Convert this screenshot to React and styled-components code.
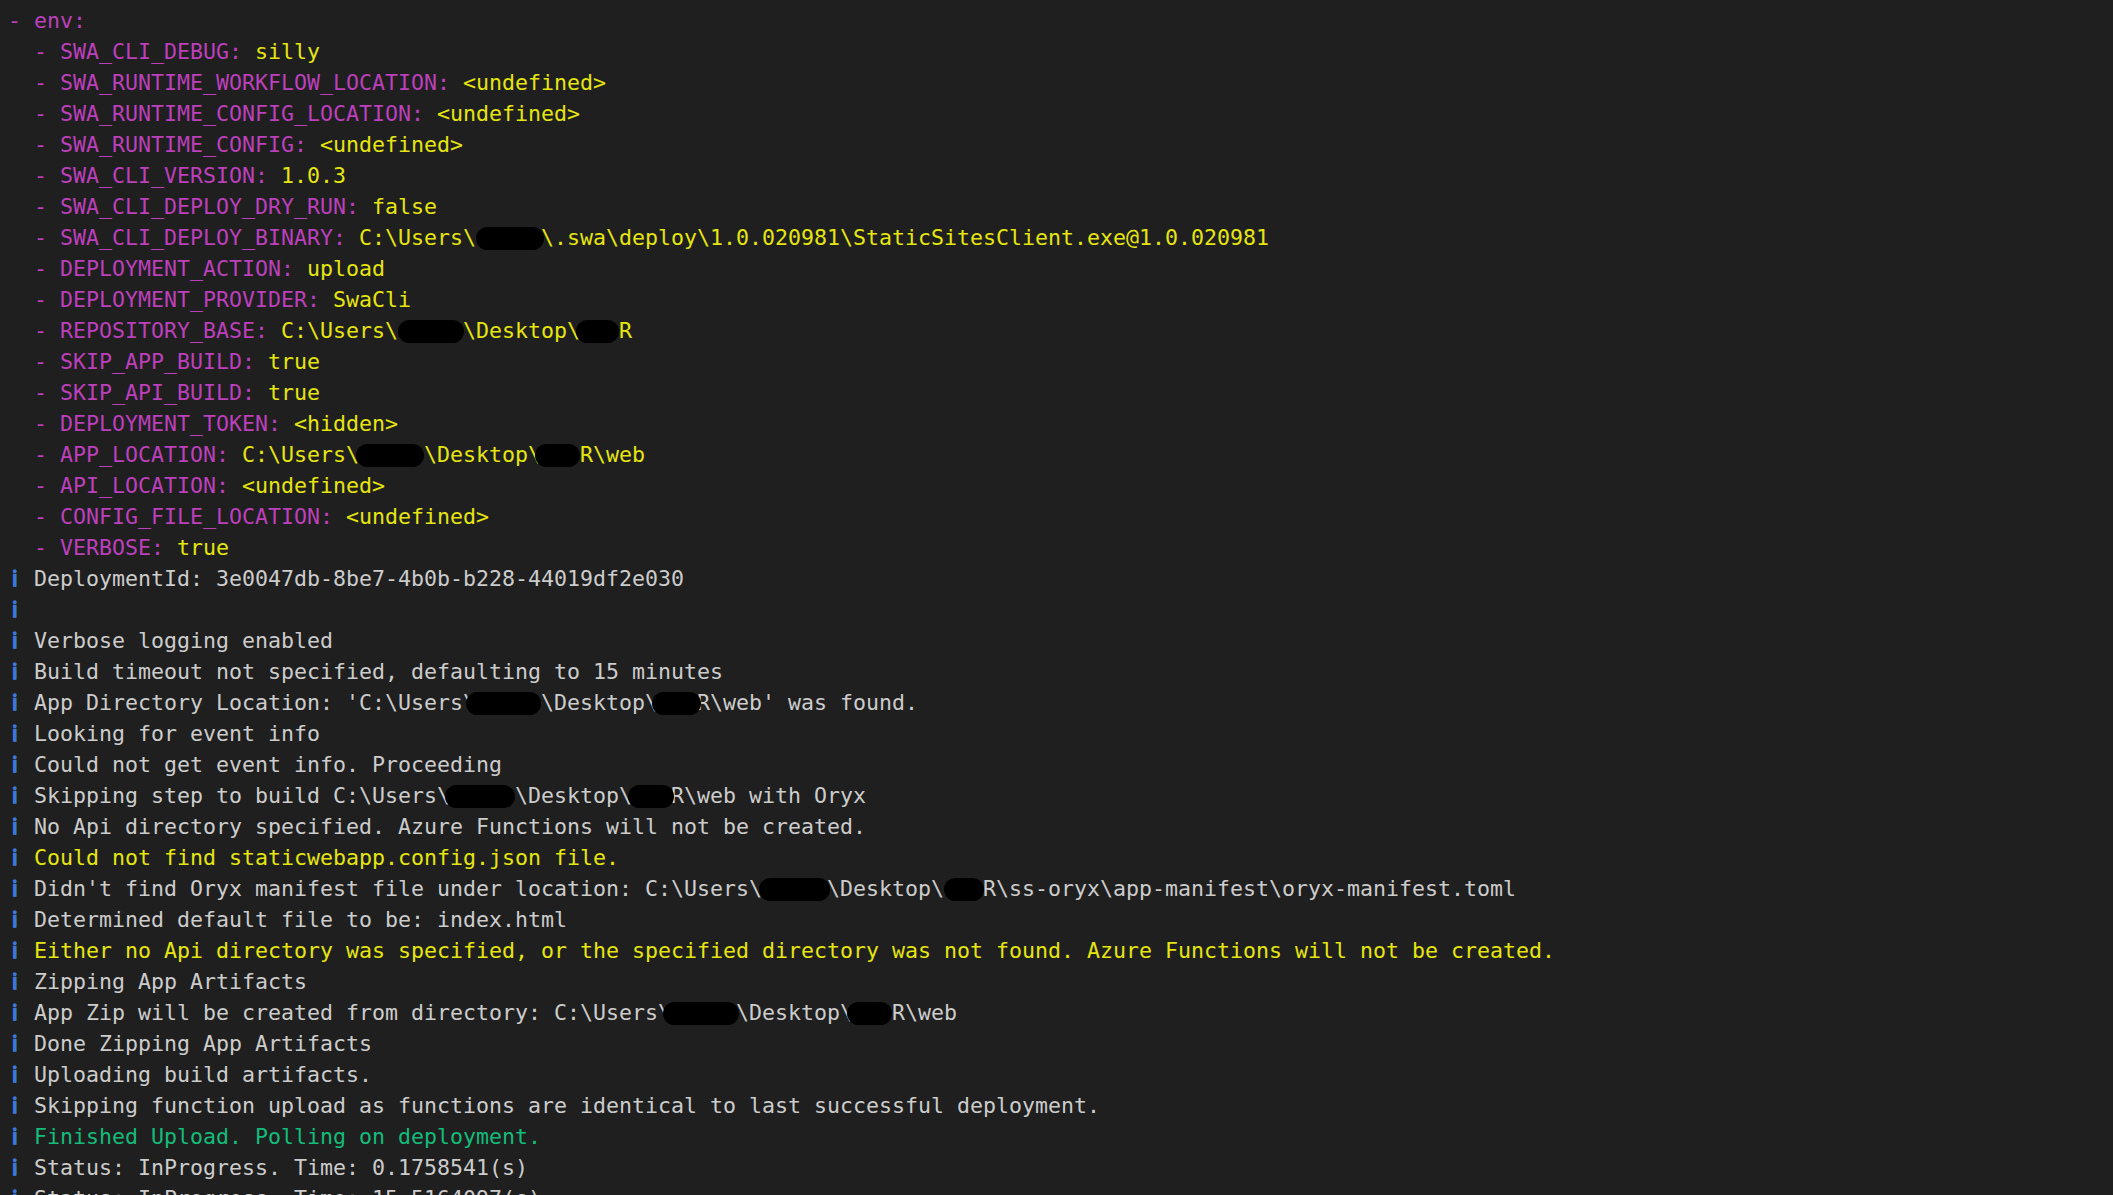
import React from 'react';
import styled, { createGlobalStyle } from 'styled-components';

const palette = {
  key: '#bc3fbc',
  val: '#e5e510',
  text: '#cccccc',
  ok: '#13bc7a',
  info: '#3b78d8',
};

const GlobalStyle = createGlobalStyle`
  html, body {
    margin: 0;
    padding: 0;
    background: #1f1f1f;
  }
  body {
    overflow: hidden;
  }
`;

const Terminal = styled.div`
  height: 100vh;
  box-sizing: border-box;
  overflow: hidden;
  padding: 5px 0 0 8px;
  background: #1f1f1f;
  color: ${palette.text};
  font-family: "DejaVu Sans Mono", "Liberation Mono", monospace;
  font-size: 21.6px;
  line-height: 31px;
  white-space: pre;
`;

const Row = styled.div`
  height: 31px;
`;

const Seg = styled.span`
  color: ${p => palette[p.$tone]};
`;

const InfoMark = styled.span`
  display: inline-block;
  width: 13px;
  text-align: center;
  color: ${palette.info};
  font-family: "DejaVu Serif", "Liberation Serif", serif;
  font-weight: bold;
  -webkit-text-stroke: 0.7px ${palette.info};
`;

// black scribbles hiding the user / project names
const Redact = styled.span`
  position: relative;
  z-index: 1;
  display: inline-block;
  width: ${p => p.$n + p.$l + p.$r}ch;
  margin: 0 ${p => -p.$r}ch 0 ${p => -p.$l}ch;
  height: 23px;
  vertical-align: -5px;
  border-radius: 12px;
  background: #000;
`;

const R = (n, l = 0, r = 0) => ({ n, l, r });

const envVars = [
  ['SWA_CLI_DEBUG', 'silly'],
  ['SWA_RUNTIME_WORKFLOW_LOCATION', '<undefined>'],
  ['SWA_RUNTIME_CONFIG_LOCATION', '<undefined>'],
  ['SWA_RUNTIME_CONFIG', '<undefined>'],
  ['SWA_CLI_VERSION', '1.0.3'],
  ['SWA_CLI_DEPLOY_DRY_RUN', 'false'],
  ['SWA_CLI_DEPLOY_BINARY', ['C:\\Users\\', R(5, 0, 0.2), '\\.swa\\deploy\\1.0.020981\\StaticSitesClient.exe@1.0.020981']],
  ['DEPLOYMENT_ACTION', 'upload'],
  ['DEPLOYMENT_PROVIDER', 'SwaCli'],
  ['REPOSITORY_BASE', ['C:\\Users\\', R(5, 0, 0.1), '\\Desktop\\', R(3, 0.3, 0), 'R']],
  ['SKIP_APP_BUILD', 'true'],
  ['SKIP_API_BUILD', 'true'],
  ['DEPLOYMENT_TOKEN', '<hidden>'],
  ['APP_LOCATION', ['C:\\Users\\', R(5, 0.2, 0), '\\Desktop\\', R(3, 0.5, 0), 'R\\web']],
  ['API_LOCATION', '<undefined>'],
  ['CONFIG_FILE_LOCATION', '<undefined>'],
  ['VERBOSE', 'true'],
];

const logs = [
  ['text', 'DeploymentId: 3e0047db-8be7-4b0b-b228-44019df2e030'],
  ['text', ''],
  ['text', 'Verbose logging enabled'],
  ['text', 'Build timeout not specified, defaulting to 15 minutes'],
  ['text', ["App Directory Location: 'C:\\Users\\", R(5, 0.8, 0), '\\Desktop\\', R(3, 0.5, 0.3), "R\\web' was found."]],
  ['text', 'Looking for event info'],
  ['text', 'Could not get event info. Proceeding'],
  ['text', ['Skipping step to build C:\\Users\\', R(5, 0.4, 0), '\\Desktop\\', R(3, 0.3, 0.2), 'R\\web with Oryx']],
  ['text', 'No Api directory specified. Azure Functions will not be created.'],
  ['val', 'Could not find staticwebapp.config.json file.'],
  ['text', ["Didn't find Oryx manifest file under location: C:\\Users\\", R(5, 0.2, 0.2), '\\Desktop\\', R(3, 0, 0.1), 'R\\ss-oryx\\app-manifest\\oryx-manifest.toml']],
  ['text', 'Determined default file to be: index.html'],
  ['val', 'Either no Api directory was specified, or the specified directory was not found. Azure Functions will not be created.'],
  ['text', 'Zipping App Artifacts'],
  ['text', ['App Zip will be created from directory: C:\\Users\\', R(5, 0.6, 0.2), '\\Desktop\\', R(3, 0.5, 0), 'R\\web']],
  ['text', 'Done Zipping App Artifacts'],
  ['text', 'Uploading build artifacts.'],
  ['text', 'Skipping function upload as functions are identical to last successful deployment.'],
  ['ok', 'Finished Upload. Polling on deployment.'],
  ['text', 'Status: InProgress. Time: 0.1758541(s)'],
  ['text', 'Status: InProgress. Time: 15.5164097(s)'],
];

function Parts({ tone, value }) {
  const parts = Array.isArray(value) ? value : [value];
  return parts.map((p, i) =>
    typeof p === 'string'
      ? <Seg key={i} $tone={tone}>{p}</Seg>
      : <Redact key={i} $n={p.n} $l={p.l} $r={p.r} />
  );
}

export default function App() {
  return (
    <>
      <GlobalStyle />
      <Terminal>
        <Row><Seg $tone="key">- env:</Seg></Row>
        {envVars.map(([name, value]) => (
          <Row key={name}>
            <Seg $tone="key">{`  - ${name}: `}</Seg>
            <Parts tone="val" value={value} />
          </Row>
        ))}
        {logs.map(([tone, value], i) => (
          <Row key={i}>
            <InfoMark>ℹ</InfoMark>
            <Seg $tone="text"> </Seg>
            <Parts tone={tone} value={value} />
          </Row>
        ))}
      </Terminal>
    </>
  );
}
